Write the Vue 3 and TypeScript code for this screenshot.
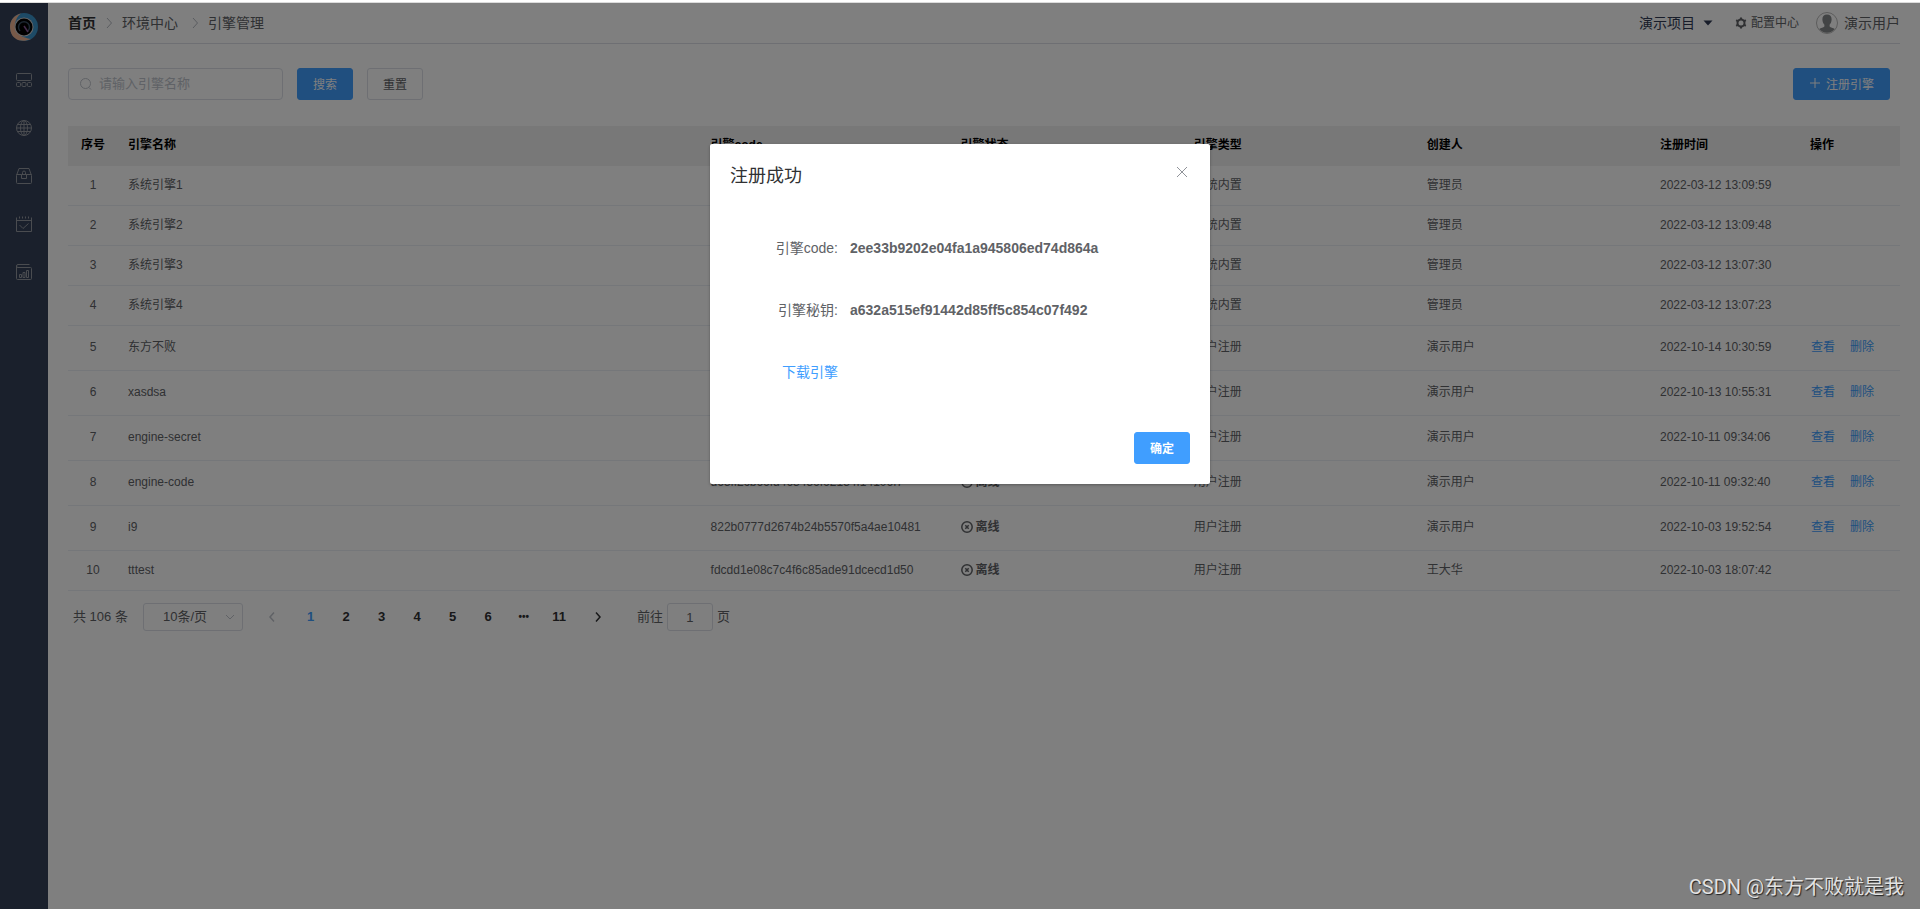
<script setup lang="ts">
import { ref } from 'vue'

interface Engine {
  name: string
  code: string
  status: string
  type: string
  creator: string
  time: string
  editable: boolean
}

const row = (
  name: string,
  creator: string,
  time: string,
  type: string,
  editable: boolean,
  code = '',
  status = '',
): Engine => ({ name, code, status, type, creator, time, editable })

const engines: Engine[] = [
  row('系统引擎1', '管理员', '2022-03-12 13:09:59', '系统内置', false),
  row('系统引擎2', '管理员', '2022-03-12 13:09:48', '系统内置', false),
  row('系统引擎3', '管理员', '2022-03-12 13:07:30', '系统内置', false),
  row('系统引擎4', '管理员', '2022-03-12 13:07:23', '系统内置', false),
  row('东方不败', '演示用户', '2022-10-14 10:30:59', '用户注册', true),
  row('xasdsa', '演示用户', '2022-10-13 10:55:31', '用户注册', true),
  row('engine-secret', '演示用户', '2022-10-11 09:34:06', '用户注册', true),
  row('engine-code', '演示用户', '2022-10-11 09:32:40', '用户注册', true, 'd65ff2cb66fd463456f62154f14106f7', '离线'),
  row('i9', '演示用户', '2022-10-03 19:52:54', '用户注册', true, '822b0777d2674b24b5570f5a4ae10481', '离线'),
  row('tttest', '王大华', '2022-10-03 18:07:42', '用户注册', false, 'fdcdd1e08c7c4f6c85ade91dcecd1d50', '离线'),
]

const pages = ['1', '2', '3', '4', '5', '6', '•••', '11']
const current = ref('1')
const keyword = ref('')
const jump = ref('1')
const dialogOpen = ref(true)
</script>

<template>
  <div class="frame">
    <div class="page">
      <aside class="sidebar">
        <a href="#" class="logo" aria-label="首页">
          <svg width="28" height="28" viewBox="0 0 28 28">
            <circle cx="14" cy="14" r="14" fill="#3a94cc" />
            <path d="M11 .4C2 2.500-1.500 10 .6 18.500S12 30 21 26c-2-.2-4-.6-6-1.500C7 22 4 17 5 11 5.600 6 8 2.500 11 .4z" fill="#f0b493" />
            <circle cx="14" cy="14" r="9.500" fill="#d5cfcf" />
            <circle cx="14" cy="14" r="8.500" fill="#000" />
            <path d="M10 18a5.500 5.500 0 1 1 8 0" fill="none" stroke="#3a5065" stroke-width="1.500" />
            <path d="M14 13l4 6" stroke="#8a5a9a" stroke-width="1.500" />
          </svg>
        </a>
        <nav class="menu">
          <a href="#" aria-label="工作台">
            <svg viewBox="0 0 16 16"><rect x=".5" y="1.500" width="15" height="7" rx="1" /><rect x=".5" y="10.500" width="4" height="4" rx="1" /><rect x="6" y="10.500" width="4" height="4" rx="1" /><rect x="11.500" y="10.500" width="4" height="4" rx="1" /></svg>
          </a>
          <a href="#" aria-label="环境中心">
            <svg viewBox="0 0 16 16"><circle cx="8" cy="8" r="7.500" /><ellipse cx="8" cy="8" rx="3.500" ry="7.500" /><path d="M8 .5v15M.5 8h15M1.500 4.500h13M1.500 11.500h13" /></svg>
          </a>
          <a href="#" aria-label="元件库">
            <svg viewBox="0 0 16 16"><path d="M.5 7.500L3 .5h10l2.500 7v7a1 1 0 0 1-1 1h-13a1 1 0 0 1-1-1zM.5 6.500H5.500M10.500 6.500h5M5.500 6.500h5v4h-5zM6.500 6.500V4.500a1.500 1.500 0 0 1 3 0v2" /></svg>
          </a>
          <a href="#" aria-label="测试计划">
            <svg viewBox="0 0 16 16"><path d="M.5 1.500v14h15v-14M.5 4.500h15M3.500 .5v2M6.500 .5v2M9.500 .5v2M12.500 .5v2M3.500 9l3.500 3.500 5.500-5" /></svg>
          </a>
          <a href="#" aria-label="测试报告">
            <svg viewBox="0 0 16 16"><path d="M13.500 .5H2A1.500 1.500 0 0 0 2 3.500h12.500a1 1 0 0 1 1 1v10a1 1 0 0 1-1 1h-13a1 1 0 0 1-1-1V2M3.500 10.500h2v3h-2zM7 8.500h2v5H7zM10.500 6.500h2v7h-2z" /></svg>
          </a>
        </nav>
      </aside>

      <main class="main">
        <header class="topbar">
          <nav class="crumbs">
            <a href="#" class="home">首页</a>
            <svg class="sep" viewBox="0 0 14 14"><path d="M5 2l4.500 5L5 12" /></svg>
            <a href="#" class="section">环境中心</a>
            <svg class="sep" viewBox="0 0 14 14"><path d="M5 2l4.500 5L5 12" /></svg>
            <span>引擎管理</span>
          </nav>
          <div class="tools">
            <button type="button" class="project">演示项目
              <svg width="10" height="6" viewBox="0 0 10 6"><path d="M.5 .5h9L5 5.500z" fill="currentColor" /></svg>
            </button>
            <a href="#" class="config">
              <svg width="12" height="12" viewBox="0 0 12 12"><circle cx="6" cy="6" r="3.500" fill="none" stroke="currentColor" stroke-width="2" /><path d="M6 .5v2M6 9.500v2M1.200 3.200L3 4.300M9 7.700l1.800 1.100M1.200 8.800L3 7.700M9 4.300l1.800-1.100" stroke="currentColor" stroke-width="2" /></svg>
              配置中心
            </a>
            <button type="button" class="user">
              <svg width="22" height="22" viewBox="0 0 22 22"><circle cx="11" cy="11" r="10.500" fill="none" stroke="#b9b9b9" /><path d="M11 2.500c3.200 0 4.800 2.200 4.600 5.200-.1 2.200-1 4-2 5v1.800c1 1 3.500 1.300 5.200 2.500A9.800 9.800 0 0 1 3.200 17c1.700-1.200 4.200-1.500 5.200-2.500v-1.800c-1-1-1.900-2.800-2-5C6.200 4.700 7.800 2.500 11 2.500z" fill="#85888a" /></svg>
              演示用户
            </button>
          </div>
        </header>

        <form class="filters" @submit.prevent>
          <label class="search">
            <svg width="14" height="14" viewBox="0 0 14 14"><circle cx="6.500" cy="6.500" r="5" /><path d="M10 10.500l2 2" /></svg>
            <input v-model="keyword" type="text" placeholder="请输入引擎名称" aria-label="引擎名称" />
          </label>
          <button type="submit" class="btn primary">搜索</button>
          <button type="button" class="btn" @click="keyword = ''">重置</button>
          <button type="button" class="btn primary create">
            <svg width="12" height="12" viewBox="0 0 12 12"><path d="M6 1v10M1 6h10" stroke="currentColor" /></svg>注册引擎
          </button>
        </form>

        <table class="grid">
          <colgroup>
            <col class="c-index" /><col class="c-name" /><col class="c-code" /><col /><col /><col /><col class="c-time" /><col class="c-ops" />
          </colgroup>
          <thead>
            <tr>
              <th class="index">序号</th><th>引擎名称</th><th>引擎code</th><th>引擎状态</th><th>引擎类型</th><th>创建人</th><th>注册时间</th><th>操作</th>
            </tr>
          </thead>
          <tbody>
            <tr v-for="(e, i) in engines" :key="e.name" :class="{ tall: e.editable }">
              <td class="index">{{ i + 1 }}</td>
              <td>{{ e.name }}</td>
              <td>{{ e.code }}</td>
              <td>
                <span v-if="e.status" class="status">
                  <svg width="12" height="12" viewBox="0 0 12 12"><circle cx="6" cy="6" r="5.200" /><path d="M4.300 4.300l3.400 3.400M7.700 4.300L4.300 7.700" /></svg>
                  {{ e.status }}
                </span>
              </td>
              <td>{{ e.type }}</td>
              <td>{{ e.creator }}</td>
              <td>{{ e.time }}</td>
              <td>
                <div v-if="e.editable" class="ops">
                  <button type="button">查看</button>
                  <button type="button">删除</button>
                </div>
              </td>
            </tr>
          </tbody>
        </table>

        <footer class="pager">
          <span>共 106 条</span>
          <span class="size">
            <select aria-label="每页条数"><option>10条/页</option></select>
            <svg width="12" height="12" viewBox="0 0 12 12"><path d="M2 4l4 4 4-4" /></svg>
          </span>
          <button type="button" class="arrow prev" disabled aria-label="上一页">
            <svg width="12" height="12" viewBox="0 0 12 12"><path d="M8 1.500L4 6l4 4.500" /></svg>
          </button>
          <div class="numbers">
            <button v-for="p in pages" :key="p" type="button" :class="{ active: p === current, more: p === '•••' }" @click="current = p">{{ p }}</button>
          </div>
          <button type="button" class="arrow" aria-label="下一页">
            <svg width="12" height="12" viewBox="0 0 12 12"><path d="M4 1.500L8 6l-4 4.500" /></svg>
          </button>
          <label class="jump">前往<input v-model="jump" type="text" />页</label>
        </footer>
      </main>

      <div v-if="dialogOpen" class="mask">
        <section class="dialog" role="dialog" aria-labelledby="dialog-title">
          <header class="dialog-head">
            <h2 id="dialog-title">注册成功</h2>
            <button type="button" aria-label="关闭" @click="dialogOpen = false">
              <svg width="16" height="16" viewBox="0 0 16 16"><path d="M3 3l10 10M13 3L3 13" /></svg>
            </button>
          </header>
          <dl class="dialog-body">
            <div class="item"><dt>引擎code:</dt><dd>2ee33b9202e04fa1a945806ed74d864a</dd></div>
            <div class="item"><dt>引擎秘钥:</dt><dd>a632a515ef91442d85ff5c854c07f492</dd></div>
            <div class="item"><dt><a href="#">下载引擎</a></dt></div>
          </dl>
          <footer class="dialog-foot">
            <button type="button" class="btn primary confirm" @click="dialogOpen = false">确定</button>
          </footer>
        </section>
      </div>

      <div class="watermark">CSDN @东方不败就是我</div>
    </div>
  </div>
</template>

<style>
body {
  margin: 0;
  background: #fff;
}
</style>

<style scoped>
.frame {
  display: flex;
  flex-direction: column;
  box-sizing: border-box;
  min-height: 100vh;
  padding-top: 2px;
}
.page {
  position: relative;
  display: flex;
  flex: 1;
  box-sizing: border-box;
  border-top: 1px solid #dcdcdc;
  font-family: "Liberation Sans", "Noto Sans CJK SC", sans-serif;
  font-size: 14px;
  color: #606266;
}
.page * {
  box-sizing: border-box;
}
button,
input,
select {
  font: inherit;
  color: inherit;
}
button {
  padding: 0;
  border: 0;
  background: none;
  cursor: pointer;
}
a {
  color: inherit;
  text-decoration: none;
}
svg {
  flex: none;
}

.sidebar {
  flex: none;
  width: 48px;
  background: #344058;
}
.logo {
  display: flex;
  justify-content: center;
  padding: 10px 0 15px;
}
.menu a {
  display: flex;
  align-items: center;
  justify-content: center;
  height: 48px;
}
.menu svg {
  width: 16px;
  height: 16px;
  fill: none;
  stroke: #9498a0;
}

.main {
  flex: 1;
  min-width: 0;
  padding: 0 20px;
}
.topbar {
  display: flex;
  align-items: center;
  justify-content: space-between;
  height: 41px;
  border-bottom: 1px solid #dcdfe6;
  line-height: 20px;
}
.crumbs,
.tools,
.project,
.config,
.user {
  display: flex;
  align-items: center;
}
.home {
  font-weight: 700;
  color: #303133;
}
.section {
  margin-right: 4px;
}
.sep {
  width: 14px;
  height: 14px;
  margin: 0 6px;
  fill: none;
  stroke: #b4b8c0;
}
.project {
  gap: 8px;
  color: #303a55;
}
.config {
  gap: 4px;
  margin: 0 17px 0 22px;
  font-size: 12px;
}
.user {
  gap: 6px;
}

.filters {
  display: flex;
  gap: 14px;
  padding: 24px 10px 26px 0;
}
.search {
  display: flex;
  align-items: center;
  gap: 6px;
  width: 215px;
  height: 32px;
  padding: 0 10px;
  border: 1px solid #dcdfe6;
  border-radius: 4px;
}
.search svg {
  fill: none;
  stroke: #c0c4cc;
}
.search input {
  width: 100%;
  min-width: 0;
  padding: 0 0 2px;
  border: 0;
  outline: 0;
  background: none;
  font-size: 13px;
}
.search input::placeholder {
  color: #c0c4cc;
}
.btn {
  height: 32px;
  padding: 0 15px 2px;
  border: 1px solid #dcdfe6;
  border-radius: 3px;
  background: #fff;
  font-size: 12px;
}
.btn.primary {
  border-color: #409eff;
  background: #409eff;
  color: #fff;
}
.btn.create {
  display: flex;
  align-items: center;
  gap: 5px;
  margin-left: auto;
}

.grid {
  width: 100%;
  table-layout: fixed;
  border-collapse: separate;
  border-spacing: 0;
  font-size: 12px;
  line-height: 20px;
}
.c-index {
  width: 50px;
}
.c-name {
  width: 31.8%;
}
.c-code {
  width: 250px;
}
.c-time {
  width: 150px;
}
.c-ops {
  width: 100px;
}
th,
td {
  height: 40px;
  padding: 0 10px 2px;
  text-align: left;
  white-space: nowrap;
}
th {
  background: #f0f0f0;
  color: #000;
}
td {
  border-bottom: 1px solid #ebeef5;
}
.tall td {
  height: 45px;
}
.index {
  text-align: center;
}
.status {
  display: flex;
  align-items: center;
  gap: 3px;
  font-weight: 700;
}
.status svg {
  fill: none;
  stroke: currentColor;
  stroke-width: 1.5;
}
.ops {
  display: flex;
  gap: 15px;
  padding-left: 1px;
  color: #409eff;
}

.pager {
  display: flex;
  align-items: center;
  padding: 12px 5px;
  font-size: 13px;
  line-height: 26px;
}
.size {
  position: relative;
  width: 100px;
  height: 28px;
  margin-left: 15px;
}
.size select {
  width: 100%;
  height: 28px;
  padding: 0 0 2px 19px;
  border: 1px solid #dcdfe6;
  border-radius: 3px;
  appearance: none;
  background: none;
}
.size svg {
  position: absolute;
  top: 8px;
  right: 7px;
  fill: none;
  stroke: #c0c4cc;
}
.arrow {
  display: flex;
  align-items: center;
  justify-content: center;
  width: 42px;
  height: 28px;
  color: #303133;
}
.arrow.prev {
  margin-left: 8px;
}
.arrow:disabled {
  color: #c0c4cc;
}
.arrow svg {
  fill: none;
  stroke: currentColor;
  stroke-width: 1.5;
}
.numbers {
  display: flex;
  width: 284px;
}
.numbers button {
  flex: 1 1 0;
  color: #303133;
  font-weight: 700;
}
.numbers .active {
  color: #409eff;
}
.numbers .more {
  font-size: 10px;
}
.jump {
  display: flex;
  align-items: center;
  gap: 4px;
  margin-left: 18px;
}
.jump input {
  width: 46px;
  height: 28px;
  padding: 0;
  border: 1px solid #dcdfe6;
  border-radius: 3px;
  background: none;
  text-align: center;
}

.mask {
  position: absolute;
  inset: 0;
  padding: 141px 20px 0;
  background: rgba(0, 0, 0, 0.5);
}
.dialog {
  width: 500px;
  margin: 0 auto;
  border-radius: 2px;
  background: #fff;
  box-shadow: 0 1px 3px rgba(0, 0, 0, 0.3);
}
.dialog-head {
  display: flex;
  justify-content: space-between;
  padding: 20px 20px 10px;
}
.dialog-head h2 {
  margin: 0;
  font-size: 18px;
  font-weight: 400;
  line-height: 24px;
  color: #303133;
}
.dialog-head button {
  height: 16px;
}
.dialog-head svg {
  display: block;
  fill: none;
  stroke: #909399;
}
.dialog-body {
  margin: 0;
  padding: 30px 20px 8px;
}
.item {
  display: flex;
  margin-bottom: 22px;
  line-height: 40px;
}
.item dt {
  width: 120px;
  padding-right: 12px;
  text-align: right;
}
.item dt a {
  color: #409eff;
}
.item dd {
  margin: 0;
  font-weight: 700;
}
.dialog-foot {
  padding: 10px 20px 20px;
}
.dialog-foot .btn {
  display: block;
  margin-left: auto;
}
.confirm {
  font-weight: 700;
}
.watermark {
  position: absolute;
  right: 16px;
  bottom: 8px;
  font-family: Roboto, "Noto Sans CJK SC", sans-serif;
  font-size: 20px;
  line-height: 28px;
  color: #e2e2e2;
  text-shadow: 1px 1px 1px #222;
}
</style>
